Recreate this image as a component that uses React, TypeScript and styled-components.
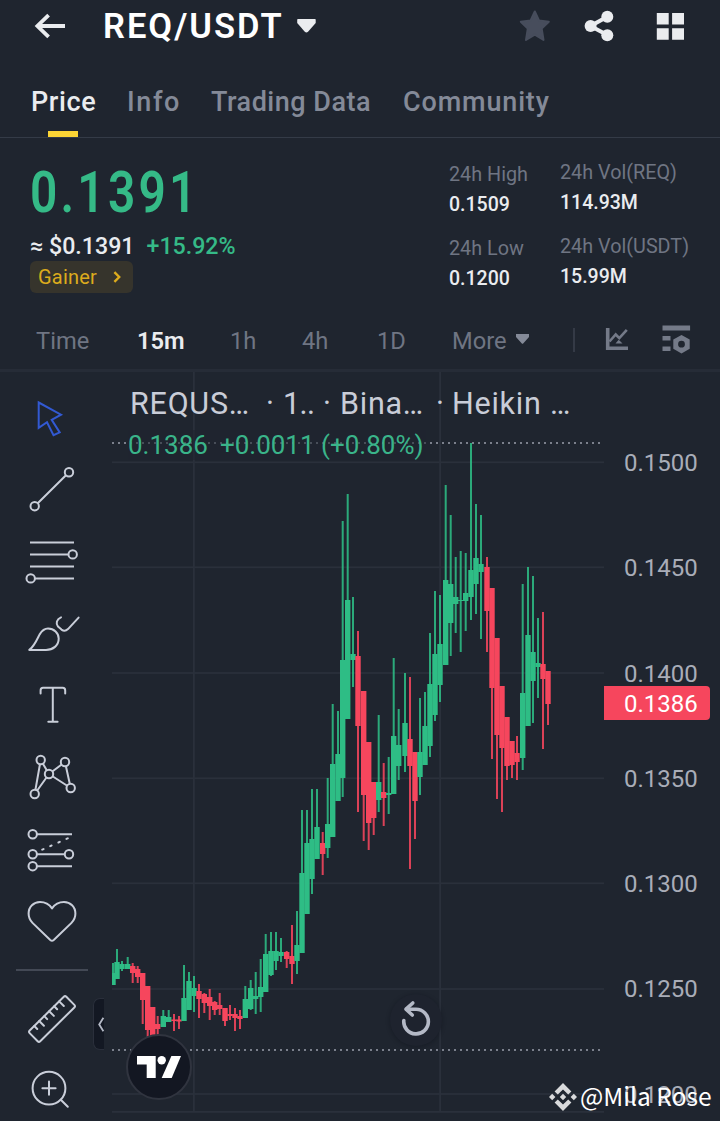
import React from "react";
import styled, { createGlobalStyle } from "styled-components";

const c = {
  bg: "#1f252f",
  line: "#2b313c",
  grid: "#2a303b",
  text: "#eaecef",
  muted: "#848a98",
  dim: "#6f7583",
  green: "#2ebd85",
  red: "#f6465d",
  tool: "#c9ced9",
  yellow: "#fcd535",
};

const GlobalStyle = createGlobalStyle`
  * { box-sizing: border-box; }
  body { margin: 0; background: ${c.bg}; }
`;

const Screen = styled.div`
  width: 720px;
  height: 1121px;
  display: flex;
  flex-direction: column;
  overflow: hidden;
  position: relative;
  background: ${c.bg};
  color: ${c.text};
  font-family: Roboto, "Liberation Sans", sans-serif;
  white-space: nowrap;
`;

const Header = styled.header`
  height: 51px;
  flex: none;
  display: flex;
  align-items: center;
  padding-left: 34px;
`;

const Pair = styled.h1`
  margin: 2px 0 0 37px;
  width: 194px;
  font-size: 34.5px;
  font-weight: 600;
  line-height: 49px;
  letter-spacing: 2px;
  color: #fff;
`;

const HeaderActions = styled.div`
  display: flex;
  align-items: center;
  margin-left: 203px;
  gap: 32px;
`;

const Icon = styled.svg<{ $gap?: number }>`
  display: block;
  flex: none;
  overflow: visible;
  margin-left: ${(p) => p.$gap ?? 0}px;
`;

const Tabs = styled.nav`
  height: 87px;
  flex: none;
  display: flex;
  gap: 31px;
  padding-left: 31px;
  border-bottom: 1px solid #343b47;
`;

const Tab = styled.div<{ $w: number; $ls: number; $active?: boolean }>`
  width: ${(p) => p.$w}px;
  height: 86px;
  display: flex;
  flex-direction: column;
  justify-content: space-between;
  padding-top: 34px;
  font-size: 27px;
  line-height: 35px;
  font-weight: 500;
  letter-spacing: ${(p) => p.$ls}px;
  color: ${(p) => (p.$active ? c.text : c.muted)};
  &::after {
    content: "";
    width: 30px;
    height: 6px;
    margin-left: 17px;
    background: ${(p) => (p.$active ? c.yellow : "transparent")};
  }
`;

const Summary = styled.section`
  height: 172px;
  flex: none;
  display: flex;
`;

const PriceBlock = styled.div`
  width: 449px;
  padding: 23px 0 0 30px;
`;

const LastPrice = styled.div`
  width: 190px;
  font-size: 57px;
  line-height: 64px;
  height: 71px;
  font-weight: 600;
  letter-spacing: 3.8px;
  color: #35ba87;
  transform: scaleX(0.84);
  transform-origin: 0 50%;
`;

const FiatRow = styled.div`
  display: flex;
  gap: 12px;
  height: 29px;
  font-size: 23.2px;
  line-height: 28px;
  font-weight: 500;
`;

const Change = styled.span`
  color: #35ba87;
`;

const Badge = styled.div`
  width: 103px;
  height: 32px;
  display: flex;
  align-items: center;
  justify-content: space-between;
  padding: 0 12px 0 8px;
  border-radius: 6px;
  background: #36342c;
  color: #dcab1d;
  font-size: 20px;
  letter-spacing: 0.2px;
`;

const StatColumn = styled.dl<{ $w: number; $top: number }>`
  width: ${(p) => p.$w}px;
  margin: 0;
  padding-top: ${(p) => p.$top}px;
`;

const StatName = styled.dt`
  height: 30px;
  line-height: 29px;
  font-size: 19.8px;
  color: ${c.dim};
`;

const StatValue = styled.dd`
  margin: 0 0 15px;
  height: 29px;
  line-height: 29px;
  font-size: 19.5px;
  font-weight: 500;
  color: ${c.text};
`;

const Intervals = styled.div`
  height: 62px;
  flex: none;
  display: flex;
  align-items: center;
  padding-left: 36px;
  border-bottom: 3px solid #262c37;
`;

const Interval = styled.div<{ $w: number; $active?: boolean }>`
  width: ${(p) => p.$w}px;
  padding-top: 2px;
  display: flex;
  align-items: center;
  gap: 9px;
  font-size: 23.7px;
  font-weight: ${(p) => (p.$active ? 600 : 400)};
  color: ${(p) => (p.$active ? c.text : c.dim)};
`;

const Separator = styled.div`
  width: 2px;
  height: 24px;
  background: #343a46;
  margin-right: 31px;
`;

const Workspace = styled.main`
  flex: 1;
  min-height: 0;
  display: flex;
  position: relative;
  overflow: hidden;
`;

const Toolbar = styled.aside`
  width: 104px;
  flex: none;
  padding-top: 10px;
`;

const ToolIcon = styled.svg`
  display: block;
  width: 104px;
  height: 71.8px;
  fill: none;
  stroke: ${c.tool};
  stroke-width: 2;
  stroke-linecap: round;
  stroke-linejoin: round;
`;

const ToolDivider = styled.hr`
  width: 72px;
  height: 2px;
  margin: 12.6px 16px 12px;
  border: 0;
  background: #434955;
`;

const Plot = styled.div`
  width: 500px;
  flex: none;
  position: relative;
`;

const PlotSvg = styled.svg`
  display: block;
`;

const Legend = styled.div`
  position: absolute;
  left: 24px;
  top: 12px;
`;

const LegendTitle = styled.div`
  display: flex;
  height: 40px;
  line-height: 40px;
  font-size: 30.5px;
  letter-spacing: 0.75px;
  color: #c9cdd8;
  padding-left: 2px;
`;

const LegendPart = styled.span<{ $w: number; $ls?: number }>`
  width: ${(p) => p.$w}px;
  letter-spacing: ${(p) => p.$ls ?? 0.75}px;
`;

const LegendValues = styled.div`
  display: flex;
  width: 298px;
  gap: 12px;
  height: 30px;
  margin-top: 6px;
  line-height: 30px;
  font-size: 26px;
  color: #3ab48a;
  background: rgba(31, 37, 47, 0.55);
`;

const Axis = styled.div`
  width: 116px;
  flex: none;
  padding: 39px 0 0 20px;
  position: relative;
`;

const AxisLabel = styled.div`
  height: 105.3px;
  line-height: 105.3px;
  font-size: 24px;
  color: #a9adb8;
`;

const PriceTag = styled.div`
  position: absolute;
  left: 0;
  top: 314px;
  width: 106px;
  height: 34px;
  line-height: 36px;
  padding-left: 20px;
  border-radius: 0 4px 4px 0;
  background: ${c.red};
  color: #fff;
  font-size: 24px;
`;

const CollapseHandle = styled.div`
  position: absolute;
  left: 93px;
  top: 626px;
  width: 11px;
  height: 52px;
  border: 1px solid #2a2f3b;
  border-right: 0;
  border-radius: 7px 0 0 7px;
  background: #131823;
  display: flex;
  align-items: center;
  justify-content: flex-end;
`;

const RoundButton = styled.div<{ $x: number; $y: number; $size: number; $logo?: boolean }>`
  position: absolute;
  left: ${(p) => p.$x}px;
  top: ${(p) => p.$y}px;
  width: ${(p) => p.$size}px;
  height: ${(p) => p.$size}px;
  display: flex;
  align-items: center;
  justify-content: center;
  border-radius: 50%;
  background: ${(p) => (p.$logo ? "#131722" : "#1e232e")};
  border: ${(p) => (p.$logo ? "2px solid #30343f" : "0")};
  box-shadow: ${(p) => (p.$logo ? "none" : "0 1px 4px rgba(10, 12, 20, 0.35)")};
`;

const Watermark = styled.div`
  position: absolute;
  left: 549px;
  top: 1079px;
  height: 36px;
  display: flex;
  align-items: center;
  gap: 3px;
`;

const Handle = styled.span`
  height: 36px;
  margin-top: -4px;
  font-family: "Noto Sans CJK SC", "Noto Sans", sans-serif;
  font-size: 24.6px;
  line-height: 36px;
  color: #fff;
`;

/* Each candle: x, high, low, body top, body bottom, direction (1 = up, 0 = down) */
type Candle = [number, number, number, number, number, 0 | 1];

const candles: Candle[] = [
  [113, 963, 985, 973, 985, 1],
  [117, 949, 979, 962, 979, 1],
  [122, 961, 971, 964, 969, 1],
  [127.7, 957, 969, 964, 969, 1],
  [132.7, 963, 983, 966, 973, 0],
  [137.7, 966, 983, 969, 977, 0],
  [142.7, 973, 1024, 973, 1000, 0],
  [147.7, 986, 1037, 986, 1030, 0],
  [152.7, 1007, 1036, 1007, 1036, 0],
  [157.7, 1016, 1035, 1024, 1029, 0],
  [163.3, 1010, 1027, 1016, 1027, 1],
  [168.7, 1010, 1022, 1017, 1022, 1],
  [174, 1014, 1031, 1019.5, 1021, 0],
  [179, 1016, 1029, 1019.5, 1021.5, 0],
  [184, 965, 1021, 998, 1021, 1],
  [189, 972, 1010, 981, 1010, 1],
  [194, 976, 1012, 988, 996, 1],
  [199, 984, 1018, 991, 999, 0],
  [204.3, 993, 1013, 994, 1003, 0],
  [209.7, 989, 1020, 997, 1006, 0],
  [214.7, 1001, 1015, 1002, 1010, 0],
  [219.7, 993, 1015, 1005, 1009, 0],
  [225, 1008, 1026, 1008, 1021, 0],
  [230, 1005, 1020, 1014, 1016, 0],
  [235, 1008, 1031, 1014, 1018, 0],
  [240, 1010, 1029, 1016, 1019, 0],
  [245.3, 986, 1018, 999, 1018, 1],
  [250.7, 980, 1010, 988, 1009, 1],
  [255.7, 972, 1014, 996, 999, 1],
  [260.7, 959, 1012, 987, 997, 1],
  [265.7, 934, 992, 954, 992, 1],
  [271, 932, 976, 951, 975, 1],
  [276, 932, 970, 951, 961, 1],
  [281, 938, 962, 952, 956, 1],
  [286.7, 951, 968, 952, 959, 0],
  [292, 925, 984, 956, 964, 0],
  [297, 911, 974, 945, 961, 1],
  [302, 810, 953, 873, 953, 1],
  [307, 810, 914, 843, 914, 1],
  [312, 789, 894, 839, 879, 1],
  [317, 789, 859, 827, 859, 1],
  [322.7, 832, 875, 843, 854, 0],
  [327.7, 778, 858, 824, 848, 1],
  [332.7, 704, 837, 764, 837, 1],
  [338, 711, 801, 754, 801, 1],
  [342.7, 521, 797, 660, 778, 1],
  [347.7, 494, 719, 600, 719, 1],
  [353, 597, 687, 654, 660, 1],
  [358, 631, 812, 656, 726, 0],
  [363.7, 691, 841, 691, 795, 0],
  [368.7, 742, 850, 742, 823, 0],
  [373.7, 782, 835, 782, 818, 0],
  [378.7, 715, 812, 782, 800, 1],
  [383.7, 763, 826, 792, 798, 0],
  [388.7, 757, 814, 793, 795, 1],
  [393.7, 658, 794, 736, 794, 1],
  [398.7, 709, 780, 745, 766, 1],
  [405, 673, 772, 723, 756, 1],
  [410, 677, 869, 739, 766, 0],
  [415, 752, 839, 752, 801, 0],
  [420, 698, 795, 752, 777, 1],
  [425, 692, 765, 726, 765, 1],
  [430, 633, 757, 684, 746, 1],
  [435, 591, 721, 654, 715, 1],
  [440, 595, 702, 644, 685, 1],
  [445.7, 485, 665, 580, 665, 1],
  [450.7, 515, 656, 584, 623, 1],
  [455.7, 557, 633, 597, 604, 1],
  [460.7, 551, 652, 600, 601, 1],
  [465.7, 553, 631, 593, 601, 1],
  [471, 443, 620, 570, 597, 1],
  [476, 504, 614, 558, 584, 1],
  [481, 515, 639, 564, 572, 1],
  [487, 557, 652, 567, 611, 0],
  [492, 588, 759, 588, 688, 0],
  [497, 638, 799, 638, 735, 0],
  [502, 686, 812, 686, 748, 0],
  [507, 717, 780, 717, 766, 0],
  [512, 741, 778, 741, 765, 0],
  [517, 736, 780, 753, 762, 0],
  [522.7, 584, 770, 693, 758, 1],
  [528, 567, 726, 635, 726, 1],
  [533, 576, 723, 652, 681, 1],
  [538, 618, 698, 663, 667, 1],
  [543, 612, 749, 664, 679, 0],
  [548, 671, 725, 671, 704, 0],
];

const gridRows = [462.3, 567.3, 673, 778.3, 883.3, 989, 1094];
const axisPrices = ["0.1500", "0.1450", "0.1400", "0.1350", "0.1300", "0.1250", "0.1200"];

const stroke = c.tool;

const Ring = ({ x, y }: { x: number; y: number }) => (
  <circle cx={x} cy={y} r={4.2} fill={c.bg} stroke={stroke} />
);

const tools: React.ReactNode[] = [
  <path
    key="cursor"
    stroke="#3259d2"
    strokeLinejoin="miter"
    d="M38.7 402.5L61 414.7L51.7 419.8L59.7 432.4L53.5 435.2L47 422.2L38.7 427.8Z"
  />,
  <g key="trend">
    <path d="M34.7 506L69 472" />
    <Ring x={69} y={472} />
    <Ring x={34.7} y={506} />
  </g>,
  <g key="fib" strokeLinecap="butt">
    <path d="M30 542H74M30 554H72M30 566H74M31 578H74" />
    <Ring x={72.7} y={554} />
    <Ring x={30.7} y={578} />
  </g>,
  <g key="brush">
    <path d="M29.3 650.3C34 647 37 640 39.5 635C42 631 45 629 48 629C54 629 58.7 633.5 58.7 639C58.7 646 53 650.3 46 650.3Z" />
    <path d="M61 617.8C56.6 619.5 55.5 624 58 627L61.5 630C63.6 631.6 66 631.4 68 629.5L78.6 618" />
  </g>,
  <path key="text" d="M40.6 693.6V690.6Q40.6 688 43 688H62.7Q65.2 688 65.2 690.6V693.6M52.8 688V722M48.3 722H57.6" />,
  <g key="pattern">
    <path d="M34.7 794L40.7 760L49 774L65 762L70.7 788L49 774L34.7 794" />
    <Ring x={40.7} y={760} />
    <Ring x={65} y={762} />
    <Ring x={49} y={774} />
    <Ring x={70.7} y={788} />
    <Ring x={34.7} y={794} />
  </g>,
  <g key="forecast" strokeLinecap="butt">
    <path d="M33 834H72M33 854H69M33 866H72" />
    <path d="M42.2 849.5l1.4 -.6M50.2 845.9l1.4 -.6M58.4 842.3l1.4 -.6M66.4 838.7l1.4 -.6" strokeLinecap="round" />
    <Ring x={32.7} y={834} />
    <Ring x={32.7} y={854} />
    <Ring x={69} y={854} />
    <Ring x={32.7} y={866} />
  </g>,
  <path
    key="heart"
    d="M52 940.4Q51.2 940.4 50 939.3L32.5 922.5C30 920 28.6 916.8 28.6 913.2C28.6 906.5 33.6 901.6 40 901.6C45.3 901.6 49.3 904 52 908C54.7 904 58.7 901.6 64 901.6C70.4 901.6 75.4 906.5 75.4 913.2C75.4 916.8 74 920 71.5 922.5L54 939.3Q52.8 940.4 52 940.4Z"
  />,
];

const lowerTools: React.ReactNode[] = [
  <g key="ruler" transform="rotate(-44.7 52 1019)">
    <rect x={26.2} y={1011.5} width={51.6} height={15} rx={1.8} />
    <path d="M34.5 1011.5v4.2M41.5 1011.5v6.6M48.5 1011.5v4.2M55.5 1011.5v6.6M62.5 1011.5v4.2M69.5 1011.5v6.6" />
  </g>,
  <g key="zoom">
    <circle cx={49} cy={1088} r={16.4} />
    <path d="M42.4 1088H55.6M49 1081.4V1094.6M60.8 1099.5L67.8 1106.6" />
  </g>,
];

const Chart = () => (
  <PlotSvg width={500} height={749} viewBox="104 372 500 749">
    <g fill={c.grid}>
      {gridRows.map((y) => (
        <rect key={y} x={112} y={y - 0.9} width={492} height={1.8} />
      ))}
      <rect x={193} y={372} width={1.8} height={740} />
      <rect x={439.2} y={372} width={1.8} height={740} />
      <rect x={112} y={1111} width={492} height={1.8} />
    </g>
    <g stroke="#7b808c" strokeWidth={1.8} strokeDasharray="2 4">
      <path d="M112 443H602" />
      <path d="M112 1050H602" />
    </g>
    {candles.map(([x, high, low, top, bottom, up]) => (
      <g key={x} fill={up ? c.green : c.red}>
        <rect x={x - 1} y={high} width={2} height={low - high} opacity={0.88} />
        <rect
          x={Math.max(112, x - 2.7)}
          y={top}
          width={x + 2.7 - Math.max(112, x - 2.7)}
          height={bottom - top}
        />
      </g>
    ))}
  </PlotSvg>
);

export default function App() {
  return (
    <Screen>
      <GlobalStyle />
      <Header>
        <Icon width={32} height={26} viewBox="34 12 32 26" fill="none" stroke={c.text} strokeWidth={3.8}>
          <path d="M65 25H38M48.6 14.2L37.4 25L48.6 35.8" />
        </Icon>
        <Pair>REQ/USDT</Pair>
        <Icon width={19} height={14} viewBox="0 0 19 14" fill={c.text}>
          <path d="M1 0H18Q18.7 0 18.7 .8V4L11 12.8Q9.4 14.4 7.8 12.8L.2 4V.8Q.2 0 1 0Z" />
        </Icon>
        <HeaderActions>
          <Icon width={32} height={32} viewBox="519 9 32 32" fill="#474d5c" stroke="#474d5c" strokeWidth={2} strokeLinejoin="round">
            <path d="M534.8 10.5L539 19.4L548.8 20.7L541.7 27.6L543.5 39L534.8 33.6L526 39L527.8 27.6L520.8 20.7L530.6 19.4Z" />
          </Icon>
          <Icon width={32} height={32} viewBox="583 9 32 32" fill={c.text}>
            <path d="M607.3 15.7L590.5 25L607.3 34" fill="none" stroke={c.text} strokeWidth={4} />
            <circle cx={607.3} cy={15.8} r={6} />
            <circle cx={590.6} cy={25} r={6} />
            <circle cx={607.3} cy={34.2} r={6} />
          </Icon>
          <Icon $gap={9} width={28} height={28} viewBox="655.5 11 28 28" fill={c.text}>
            <path d="M656.3 12h11.9v11.4h-11.9zM671.6 12h11.9v11.4h-11.9zM656.3 27.2h11.9v11.5h-11.9zM671.6 27.2h11.9v11.5h-11.9z" />
          </Icon>
        </HeaderActions>
      </Header>

      <Tabs>
        <Tab $w={65} $ls={0.6} $active>Price</Tab>
        <Tab $w={53} $ls={1.6}>Info</Tab>
        <Tab $w={161} $ls={0.5}>Trading Data</Tab>
        <Tab $w={147} $ls={0.85}>Community</Tab>
      </Tabs>

      <Summary>
        <PriceBlock>
          <LastPrice>0.1391</LastPrice>
          <FiatRow>
            <span>≈ $0.1391</span>
            <Change>+15.92%</Change>
          </FiatRow>
          <Badge>
            Gainer
            <Icon width={8} height={12} viewBox="0 0 8 12" fill="none" stroke="#dcab1d" strokeWidth={2.4}>
              <path d="M1.4 1.2L6.2 6L1.4 10.8" />
            </Icon>
          </Badge>
        </PriceBlock>
        <StatColumn $w={111} $top={22}>
          <StatName>24h High</StatName>
          <StatValue>0.1509</StatValue>
          <StatName>24h Low</StatName>
          <StatValue>0.1200</StatValue>
        </StatColumn>
        <StatColumn $w={150} $top={20}>
          <StatName>24h Vol(REQ)</StatName>
          <StatValue>114.93M</StatValue>
          <StatName>24h Vol(USDT)</StatName>
          <StatValue>15.99M</StatValue>
        </StatColumn>
      </Summary>

      <Intervals>
        <Interval $w={101}>Time</Interval>
        <Interval $w={93} $active>15m</Interval>
        <Interval $w={72}>1h</Interval>
        <Interval $w={75}>4h</Interval>
        <Interval $w={75}>1D</Interval>
        <Interval $w={121}>
          More
          <Icon width={13} height={10} viewBox="0 0 13 10" fill={c.muted}>
            <path d="M0 -2H13V1L7.4 7.2Q6.5 8.2 5.6 7.2L0 1Z" />
          </Icon>
        </Interval>
        <Separator />
        <Icon width={23} height={23} viewBox="605 328 23 23" fill="none" stroke="#747a88" strokeWidth={2.6}>
          <path d="M606.7 328V348.3H627" strokeWidth={3.6} />
          <path d="M608.5 341.5L614.7 334.5L618.3 338.2L625.8 329.8" />
          <path d="M614.5 343.5L617.7 339.8L621.5 343.5Z" fill="#747a88" stroke="none" />
        </Icon>
        <Icon $gap={33} width={29} height={29} viewBox="661.5 325.5 29 29" fill="#747a88">
          <path d="M662 326h27.6v5H662zM662 336.6h8v4.5h-8zM662 347h8v4.6h-8z" />
          <path
            fillRule="evenodd"
            d="M681 335.4L689.2 340V349.3L681 354L672.8 349.3V340ZM681 341.3A3.4 3.4 0 1 0 681 348.1A3.4 3.4 0 1 0 681 341.3Z"
          />
        </Icon>
      </Intervals>

      <Workspace>
        <Toolbar>
          {tools.map((tool, i) => (
            <ToolIcon key={i} viewBox={`0 ${382 + i * 71.8} 104 71.8`}>
              {tool}
            </ToolIcon>
          ))}
          <ToolDivider />
          {lowerTools.map((tool, i) => (
            <ToolIcon key={i} viewBox={`0 ${983 + i * 71.8} 104 71.8`}>
              {tool}
            </ToolIcon>
          ))}
        </Toolbar>

        <Plot>
          <Chart />
          <Legend>
            <LegendTitle>
              <LegendPart $w={136}>REQUS…</LegendPart>
              <LegendPart $w={17}>·</LegendPart>
              <LegendPart $w={40} $ls={-0.6}>1..</LegendPart>
              <LegendPart $w={17}>·</LegendPart>
              <LegendPart $w={96}>Bina…</LegendPart>
              <LegendPart $w={16}>·</LegendPart>
              <LegendPart $w={130}>Heikin …</LegendPart>
            </LegendTitle>
            <LegendValues>
              <span>0.1386</span>
              <span>+0.0011 (+0.80%)</span>
            </LegendValues>
          </Legend>
          <RoundButton $x={21.5} $y={662} $size={66} $logo>
            <Icon width={44} height={22} viewBox="137.3 1057 44 22" fill="#fff">
              <path d="M137.3 1057H156V1079H147V1065.4H137.3Z" />
              <circle cx={162} cy={1061.2} r={4.2} />
              <path d="M171.7 1057H181.3L172 1079H162Z" />
            </Icon>
          </RoundButton>
          <RoundButton $x={286} $y={622} $size={52}>
            <Icon width={30} height={34} viewBox="401 1003 30 34" fill="none" stroke="#b4b9c6" strokeWidth={3.6} strokeLinecap="round" strokeLinejoin="round">
              <path d="M403.8 1020.6A12.3 12.3 0 1 0 416 1009.3H406.5" />
              <path d="M412.8 1003L406 1009.2L412.3 1015" />
            </Icon>
          </RoundButton>
        </Plot>

        <Axis>
          {axisPrices.map((p) => (
            <AxisLabel key={p}>{p}</AxisLabel>
          ))}
          <PriceTag>0.1386</PriceTag>
        </Axis>

        <CollapseHandle>
          <Icon width={6} height={15} viewBox="0 0 6 15" fill="none" stroke="#b4b9c6" strokeWidth={1.8}>
            <path d="M5.4 .8L1.2 7.5L5.4 14.2" />
          </Icon>
        </CollapseHandle>
      </Workspace>

      <Watermark>
        <Icon width={28} height={28} viewBox="0 0 28 28" fill="#d9dadc">
          <path d="M14 0L22.4 8.4L19.2 11.6L14 6.4L8.8 11.6L5.6 8.4ZM14 28L5.6 19.6L8.8 16.4L14 21.6L19.2 16.4L22.4 19.6ZM0 14L3.2 10.8L6.4 14L3.2 17.2ZM28 14L24.8 10.8L21.6 14L24.8 17.2ZM14 10.8L17.2 14L14 17.2L10.8 14Z" />
        </Icon>
        <Handle>@Mila Rose</Handle>
      </Watermark>
    </Screen>
  );
}
